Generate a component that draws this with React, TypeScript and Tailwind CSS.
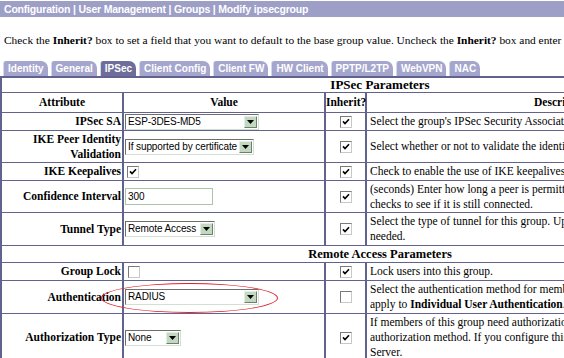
import React from "react";

const serif = "font-['Liberation_Serif',serif]";
const sans = "font-['Liberation_Sans',Arial,sans-serif]";

const TABS = ["Identity", "General", "IPSec", "Client Config", "Client FW", "HW Client", "PPTP/L2TP", "WebVPN", "NAC"];

function Box({ checked }: { checked: boolean }) {
  return (
    <span className="grid h-[12px] w-[12px] place-items-center border border-t-[#7a7a7a] border-l-[#7a7a7a] border-b-[#c8c8c8] border-r-[#c8c8c8] bg-white">
      {checked && (
        <svg width="8" height="7" viewBox="0 0 8 7">
          <path d="M1 3.4 L3 5.5 L7 1.2" stroke="#000" strokeWidth="1.6" fill="none" />
        </svg>
      )}
    </span>
  );
}

function Select({ text, className }: { text: string; className: string }) {
  return (
    <div className={`flex h-[16px] border border-t-[#6e6e6e] border-l-[#6e6e6e] border-b-[#d2dfd2] border-r-[#d2dfd2] bg-white ${className}`}>
      <span className={`flex-1 overflow-hidden whitespace-nowrap pl-[2px] text-[10px] leading-[14px] tracking-[-0.1px] text-black ${sans}`}>{text}</span>
      <span className="my-[1px] mr-[1px] grid w-[13px] place-items-center border border-t-[#e4eee4] border-l-[#e4eee4] border-b-[#6f7f6f] border-r-[#6f7f6f] bg-[#c3d8c0]">
        <svg width="7" height="4" viewBox="0 0 7 4">
          <path d="M0 0 H7 L3.5 4 Z" fill="#000" />
        </svg>
      </span>
    </div>
  );
}

const td = "border-x-2 border-y border-[#62628f] p-0 text-[11.5px] leading-[15px]";

function Row({ h, label, value, inherit, desc }: { h: string; label: React.ReactNode; value: React.ReactNode; inherit: boolean; desc: React.ReactNode }) {
  return (
    <tr className={h}>
      <td className={`${td} pr-[1px] text-right align-middle font-bold`}>{label}</td>
      <td className={`${td} pl-[1px] align-middle`}>{value}</td>
      <td className={`${td} align-middle`}>
        <div className="flex justify-center"><Box checked={inherit} /></div>
      </td>
      <td className={`${td} whitespace-nowrap pl-[3px] align-middle`}>{desc}</td>
    </tr>
  );
}

export default function App() {
  return (
    <div className={`relative h-[358px] w-[564px] overflow-hidden bg-white text-black ${serif}`}>
      <div className={`mt-[1px] h-[16px] bg-[#9e9fc7] pl-[4px] text-[10.5px] font-bold leading-[16px] tracking-[-0.2px] text-white ${sans}`}>
        Configuration | User Management | Groups | Modify ipsecgroup
      </div>

      <p className="mt-[16px] whitespace-nowrap pl-[4px] text-[11.4px] leading-[14px]">
        Check the <b>Inherit?</b> box to set a field that you want to default to the base group value. Uncheck the <b>Inherit?</b> box and enter the new value.
      </p>

      <div className="mt-[14px] flex h-[15px] items-end gap-[3px] pl-[3px]">
        {TABS.map((t) => (
          <div
            key={t}
            className={`h-[15px] rounded-tl-[3px] rounded-tr-[7px] border-l border-[#d6d6ec] px-[4px] text-[10px] font-bold leading-[15px] text-white ${sans} ${t === "IPSec" ? "bg-[#6e6e9c]" : "bg-[#a5a6ce]"}`}
          >
            {t}
          </div>
        ))}
      </div>

      <table className="w-[760px] table-fixed border-collapse border-t-2 border-[#62628f]">
        <colgroup>
          <col className="w-[122px]" />
          <col className="w-[202px]" />
          <col className="w-[41px]" />
          <col />
        </colgroup>
        <tbody>
          <tr className="h-[15px]">
            <td colSpan={4} className="border-x-2 border-[#62628f] p-0 text-center text-[13px] font-bold leading-[14px]">IPSec Parameters</td>
          </tr>
          <tr className="h-[20px]">
            <td className={`${td} text-center font-bold`}>Attribute</td>
            <td className={`${td} text-center font-bold`}>Value</td>
            <td className={`${td} text-center font-bold`}>Inherit?</td>
            <td className={`${td} text-center font-bold`}>Description</td>
          </tr>
          <Row h="h-[18px]" label="IPSec SA" value={<Select text="ESP-3DES-MD5" className="w-[134px]" />} inherit desc="Select the group's IPSec Security Association." />
          <Row
            h="h-[32px]"
            label={<>IKE Peer Identity<br />Validation</>}
            value={<Select text="If supported by certificate" className="w-[129px]" />}
            inherit
            desc="Select whether or not to validate the identity of the peer using the peer's certificate."
          />
          <Row h="h-[18px]" label="IKE Keepalives" value={<div className="pl-[2px]"><Box checked /></div>} inherit desc="Check to enable the use of IKE keepalives for this group." />
          <Row
            h="h-[32px]"
            label="Confidence Interval"
            value={<div className={`h-[17px] w-[88px] border border-[#a9c4a9] bg-white pl-[2px] text-[10px] leading-[15px] ${sans}`}>300</div>}
            inherit
            desc={<>(seconds) Enter how long a peer is permitted to idle before the VPN Concentrator<br />checks to see if it is still connected.</>}
          />
          <Row
            h="h-[33px]"
            label="Tunnel Type"
            value={<Select text="Remote Access" className="w-[90px]" />}
            inherit
            desc={<>Select the type of tunnel for this group. Update the Remote Access parameters below as<br />needed.</>}
          />
          <tr className="h-[17px]">
            <td colSpan={4} className="border-x-2 border-y border-[#62628f] p-0 text-center text-[12.5px] font-bold leading-[15px]">Remote Access Parameters</td>
          </tr>
          <Row h="h-[18px]" label="Group Lock" value={<div className="pl-[3px]"><Box checked={false} /></div>} inherit desc="Lock users into this group." />
          <Row
            h="h-[33px]"
            label="Authentication"
            value={<Select text="RADIUS" className="w-[134px]" />}
            inherit={false}
            desc={<>Select the authentication method for members of this group. This parameter does not<br />apply to <b>Individual User Authentication</b>.</>}
          />
          <Row
            h="h-[48px]"
            label="Authorization Type"
            value={<Select text="None" className="w-[56px]" />}
            inherit
            desc={<>If members of this group need authorization in order to connect, select the<br />authorization method. If you configure this field, you must also configure an Authorization<br />Server.</>}
          />
        </tbody>
      </table>

      <div className="absolute left-[101px] top-[283px] h-[30px] w-[177px] rounded-[50%] border border-[#e0202a]" />
    </div>
  );
}
